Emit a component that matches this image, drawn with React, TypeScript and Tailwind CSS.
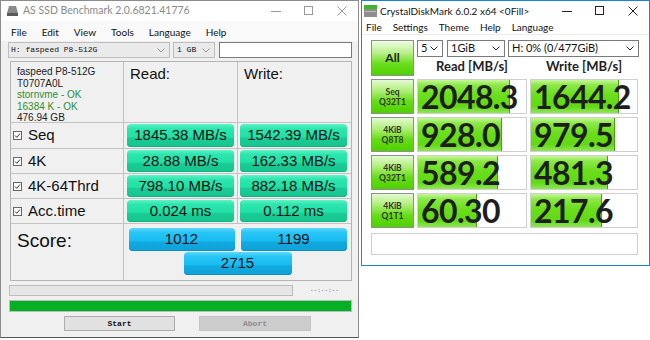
import React from 'react';

type SsdRow = { label: string; read: string; write: string; h: string };

const ssdRows: SsdRow[] = [
  { label: 'Seq', read: '1845.38 MB/s', write: '1542.39 MB/s', h: 'h-[26px]' },
  { label: '4K', read: '28.88 MB/s', write: '162.33 MB/s', h: 'h-[25px]' },
  { label: '4K-64Thrd', read: '798.10 MB/s', write: '882.18 MB/s', h: 'h-[25px]' },
  { label: 'Acc.time', read: '0.024 ms', write: '0.112 ms', h: 'h-[25px]' },
];

type CdmRow = { top: string; bottom: string; read: string; readPct: number; write: string; writePct: number };

const cdmRows: CdmRow[] = [
  { top: 'Seq', bottom: 'Q32T1', read: '2048.3', readPct: 85, write: '1644.2', writePct: 83 },
  { top: '4KiB', bottom: 'Q8T8', read: '928.0', readPct: 78, write: '979.5', writePct: 79 },
  { top: '4KiB', bottom: 'Q32T1', read: '589.2', readPct: 74, write: '481.3', writePct: 73 },
  { top: '4KiB', bottom: 'Q1T1', read: '60.30', readPct: 55, write: '217.6', writePct: 67 },
];

const WinControls = ({ color }: { color: string }) => (
  <div className="flex h-full ml-auto">
    <div className="w-[33px] flex items-center justify-center">
      <svg width="10" height="10" viewBox="0 0 10 10"><line x1="0" y1="5.5" x2="10" y2="5.5" stroke={color} strokeWidth="1" /></svg>
    </div>
    <div className="w-[33px] flex items-center justify-center">
      <svg width="10" height="10" viewBox="0 0 10 10"><rect x="0.5" y="0.5" width="8" height="8" fill="none" stroke={color} strokeWidth="1" /></svg>
    </div>
    <div className="w-[33px] flex items-center justify-center">
      <svg width="10" height="10" viewBox="0 0 10 10"><path d="M0.5 0.5 L9.5 9.5 M9.5 0.5 L0.5 9.5" stroke={color} strokeWidth="1" /></svg>
    </div>
  </div>
);

const Chevron = ({ color = '#555' }: { color?: string }) => (
  <svg width="8" height="5" viewBox="0 0 8 5"><polyline points="0.5,0.5 4,4 7.5,0.5" fill="none" stroke={color} strokeWidth="1" /></svg>
);

const CheckBox = () => (
  <svg width="9" height="9" viewBox="0 0 9 9" className="shrink-0">
    <rect x="0.5" y="0.5" width="8" height="8" fill="#fff" stroke="#666" />
    <polyline points="2,4.5 3.8,6.3 7,2.5" fill="none" stroke="#333" strokeWidth="1" />
  </svg>
);

const GreenBar = ({ text }: { text: string }) => (
  <div className="h-full rounded-[4px] flex items-center justify-center text-[15px] text-[#111] bg-[linear-gradient(to_bottom,#5ff3c8_0%,#2ce6ad_20%,#22e0a6_55%,#19cc95_62%,#17c48e_100%)] shadow-[inset_0_-1px_0_#12b282]">
    {text}
  </div>
);

const BlueBar = ({ text, w }: { text: string; w: string }) => (
  <div className={`${w} h-[23px] rounded-[4px] flex items-center justify-center text-[15px] text-[#111] bg-[linear-gradient(to_bottom,#5dd8fb_0%,#27c5f5_20%,#19bcf1_55%,#10a9e0_62%,#0ea2d8_100%)] shadow-[inset_0_-1px_0_#0b8fc2]`}>
    {text}
  </div>
);

const AsSsd = () => (
  <div className="w-[359px] h-[338px] border border-[#8c8c8c] border-b-[#555] bg-[#f0f0f0] flex flex-col font-['Liberation_Sans']">
    <div className="h-[20px] bg-white flex items-center">
      <svg width="11" height="10" viewBox="0 0 11 10" className="ml-[6px]">
        <path d="M2 0 H9 L11 7 H0 Z" fill="#8a8a8a" />
        <rect x="0" y="7" width="11" height="3" fill="#5a5a5a" />
      </svg>
      <span className="ml-[5px] text-[10.5px] text-[#8a8a8a] font-['Lato']">AS SSD Benchmark 2.0.6821.41776</span>
      <WinControls color="#9a9a9a" />
    </div>
    <div className="h-[20px] bg-[#f9f9f9] flex items-center pl-[10px] pt-[2px] gap-[15px] text-[10px] text-[#111] font-['Lato']">
      <span>File</span>
      <span>Edit</span>
      <span>View</span>
      <span>Tools</span>
      <span>Language</span>
      <span>Help</span>
    </div>
    <div className="flex items-center h-[16px] ml-[7px] mt-[1px] font-['Liberation_Mono'] text-[8px] text-[#111]">
      <div className="w-[162px] h-full border border-[#bdbdbd] bg-[#eaeaea] flex items-center pl-[2px] pr-[4px]">
        <span>H: faspeed P8-512G</span>
        <span className="ml-auto"><Chevron color="#999" /></span>
      </div>
      <div className="w-[42px] h-full ml-[3px] border border-[#bdbdbd] bg-[#eaeaea] flex items-center pl-[3px] pr-[4px]">
        <span>1 GB</span>
        <span className="ml-auto"><Chevron color="#999" /></span>
      </div>
      <div className="w-[133px] h-full ml-[4px] border border-[#7a7a7a] bg-white" />
    </div>
    <div className="ml-[9px] mt-[3px] w-[342px] border border-[#b4b4b4]">
      <div className="flex h-[61px] border-b border-[#c3c3c3]">
        <div className="w-[113px] border-r border-[#c3c3c3] pl-[6px] pt-[4px] text-[10px] leading-[11.5px] text-[#222]">
          <div>faspeed P8-512G</div>
          <div>T0707A0L</div>
          <div className="text-[#2f8f2f]">stornvme - OK</div>
          <div className="text-[#2f8f2f]">16384 K - OK</div>
          <div>476.94 GB</div>
        </div>
        <div className="w-[114px] border-r border-[#c3c3c3] pl-[6px] pt-[1px] text-[15px] text-[#111]">Read:</div>
        <div className="flex-1 pl-[6px] pt-[1px] text-[15px] text-[#111]">Write:</div>
      </div>
      {ssdRows.map((r) => (
        <div key={r.label} className={`flex ${r.h} border-b border-[#c3c3c3]`}>
          <div className="w-[113px] border-r border-[#c3c3c3] flex items-center pl-[2px] gap-[6px] text-[15px] text-[#111]">
            <CheckBox />
            <span>{r.label}</span>
          </div>
          <div className="w-[114px] border-r border-[#c3c3c3] py-[1px] pl-[3px] pr-[3px]">
            <GreenBar text={r.read} />
          </div>
          <div className="flex-1 py-[1px] pl-[2px] pr-[4px]">
            <GreenBar text={r.write} />
          </div>
        </div>
      ))}
      <div className="flex h-[56px]">
        <div className="w-[113px] border-r border-[#c3c3c3] pl-[6px] pt-[3px] text-[19px] text-[#111]">Score:</div>
        <div className="flex-1 flex flex-col items-center pt-[4px]">
          <div className="flex gap-[6px]">
            <BlueBar text="1012" w="w-[106px]" />
            <BlueBar text="1199" w="w-[106px]" />
          </div>
          <div className="mt-[1px]">
            <BlueBar text="2715" w="w-[108px]" />
          </div>
        </div>
      </div>
    </div>
    <div className="flex items-center mt-[4px] ml-[8px]">
      <div className="w-[284px] h-[11px] border border-[#bcbcbc] bg-[#e6e6e6]" />
      <span className="ml-[17px] text-[6px] text-[#555] font-['Liberation_Mono']">--:--:--</span>
    </div>
    <div className="ml-[8px] mt-[4px] w-[343px] h-[12px] border border-[#bcbcbc] bg-[#06b025]" />
    <div className="flex mt-[4px] ml-[63px] gap-[24px] font-['Liberation_Mono'] text-[8px]">
      <div className="w-[111px] h-[15px] border border-[#adadad] bg-[#e1e1e1] flex items-center justify-center text-[#111] font-bold">Start</div>
      <div className="w-[112px] h-[15px] border border-[#c4c4c4] bg-[#cccccc] flex items-center justify-center text-[#8c8c8c] font-bold">Abort</div>
    </div>
  </div>
);

const Combo = ({ text, w, ml }: { text: string; w: string; ml: string }) => (
  <div className={`${w} ${ml} h-full border border-[#7a7a7a] bg-white flex items-center pl-[3px] pr-[4px] text-[11px] text-[#111]`}>
    <span>{text}</span>
    <span className="ml-auto"><Chevron color="#222" /></span>
  </div>
);

const ValueBox = ({ value, pct, w }: { value: string; pct: number; w: string }) => (
  <div className={`relative ${w} h-full border border-[#cfcfcf] bg-white flex items-center`}>
    <div
      className="absolute left-0 top-0 bottom-0 border-r border-[#4f9d10] bg-[linear-gradient(to_bottom,#c6f79a_0%,#8ee84a_15%,#6ade1c_45%,#62d914_80%,#8fe655_100%)]"
      style={{ width: `${pct}%` }}
    />
    <div className="relative pl-[3px] h-[31px] text-[32px] leading-[31px] font-bold text-[#1e1e1e] tracking-[-0.6px] whitespace-nowrap">{value}</div>
  </div>
);

const Cdm = () => (
  <div className="ml-[2px] w-[289px] h-[266px] border border-[#1883d7] bg-white flex flex-col font-['Lato']">
    <div className="h-[20px] flex items-center">
      <svg width="13" height="12" viewBox="0 0 13 12" className="ml-[2px]">
        <rect x="0" y="0" width="13" height="4" fill="#3fb52a" />
        <rect x="0" y="4" width="13" height="8" fill="#8e8e8e" />
        <rect x="1" y="6" width="11" height="1" fill="#bcbcbc" />
      </svg>
      <span className="ml-[3px] text-[10px] text-[#111]">CrystalDiskMark 6.0.2 x64 &lt;0Fill&gt;</span>
      <WinControls color="#222" />
    </div>
    <div className="h-[14px] flex items-center pl-[4px] gap-[11px] text-[10px] text-[#111] border-b border-[#ececec]">
      <span>File</span>
      <span>Settings</span>
      <span>Theme</span>
      <span>Help</span>
      <span>Language</span>
    </div>
    <div className="pl-[9px] pt-[5px] flex flex-col">
      <div className="flex h-[36px]">
        <div className="w-[43px] h-full border border-[#8f8f8f] flex items-center justify-center text-[12px] font-bold text-[#222] bg-[linear-gradient(to_bottom,#eefde4_0%,#b8f08a_35%,#6ede22_65%,#4fd100_100%)]">
          All
        </div>
        <div className="ml-[3px] flex flex-col">
          <div className="flex h-[17px]">
            <Combo text="5" w="w-[26px]" ml="ml-0" />
            <Combo text="1GiB" w="w-[58px]" ml="ml-[4px]" />
            <Combo text="H: 0% (0/477GiB)" w="w-[131px]" ml="ml-[3px]" />
          </div>
          <div className="flex h-[19px] items-center text-[13px] font-bold text-[#222]">
            <div className="w-[110px] text-center">Read [MB/s]</div>
            <div className="w-[108px] ml-[3px] text-center">Write [MB/s]</div>
          </div>
        </div>
      </div>
      {cdmRows.map((r, i) => (
        <div key={i} className="flex h-[35px] mt-[3px] gap-[3px]">
          <div className="w-[43px] h-full border border-[#8f8f8f] flex flex-col items-center justify-center text-[8.5px] leading-[10px] font-bold text-[#333] bg-[linear-gradient(to_bottom,#e4fad2_0%,#aaee72_35%,#66dc18_65%,#4fd100_100%)]">
            <span>{r.top}</span>
            <span>{r.bottom}</span>
          </div>
          <ValueBox value={r.read} pct={r.readPct} w="w-[110px]" />
          <ValueBox value={r.write} pct={r.writePct} w="w-[108px]" />
        </div>
      ))}
      <div className="mt-[5px] w-[267px] h-[22px] border border-[#cfcfcf] bg-white" />
    </div>
  </div>
);

export default function App() {
  return (
    <div className="w-[650px] h-[340px] bg-white flex items-start overflow-hidden">
      <AsSsd />
      <Cdm />
    </div>
  );
}
